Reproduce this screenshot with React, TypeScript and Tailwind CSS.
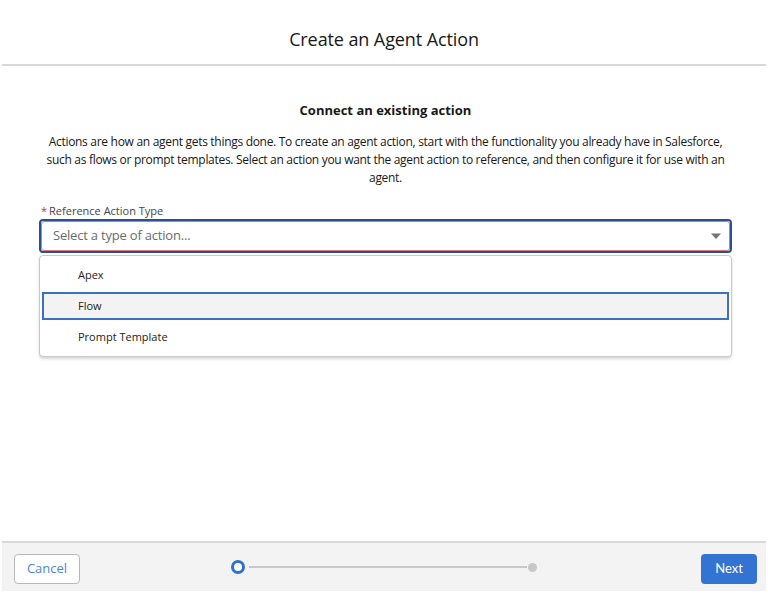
import React from "react";

export default function App() {
  const font = { fontFamily: '"Open Sans", "Noto Sans", sans-serif' };
  return (
    <div className="w-[768px] h-[595px] bg-white flex flex-col text-[#181818]" style={font}>
      <div className="h-[66px] mx-[2px] border-b-2 border-[#d8d8d8] flex items-center justify-center">
        <h1 className="text-[18px] font-normal mt-[14px] tracking-[-0.1px]">Create an Agent Action</h1>
      </div>
      <div className="flex-1 flex flex-col pl-[39px] pr-[36px] pt-[34px]">
        <h2 className="text-center text-[13px] font-bold leading-[20px]">Connect an existing action</h2>
        <p className="text-center text-[12px] leading-[18px] mt-[13px] -mx-[2px] tracking-[-0.3px]">
          Actions are how an agent gets things done. To create an agent action, start with the functionality you already have in Salesforce, such as flows or prompt templates. Select an action you want the agent action to reference, and then configure it for use with an agent.
        </p>
        <div className="mt-[17px] text-[11px] leading-[14px] text-[#444] pl-[2px]">
          <span className="text-[#c23934] mr-[2px]">*</span>Reference Action Type
        </div>
        <div className="relative mt-[1px]">
          <div className="h-[34px] rounded-[4px] border-2 border-[#2a4f94] bg-white">
            <div className="h-full rounded-[3px] border border-[#d9777a] flex items-center justify-between pl-[11px] pr-[7px]">
              <span className="text-[13px] text-[#6b6b6b] tracking-[-0.2px]">Select a type of action...</span>
              <svg width="12" height="8" viewBox="0 0 12 8"><path d="M1 1.5h10L6 7z" fill="#747474" /></svg>
            </div>
          </div>
          <div className="mt-[2px] rounded-[4px] border border-[#c9c9c9] bg-white shadow-[0_2px_3px_rgba(0,0,0,0.16)] pt-[3px] pb-[2px] px-[2px]">
            <div className="h-[33px] flex items-center pl-[36px] text-[11px] text-[#222]">Apex</div>
            <div className="h-[28px] flex items-center pl-[34px] text-[11px] text-[#222] bg-[#f3f3f3] border-2 border-[#3b72c0]">Flow</div>
            <div className="h-[34px] flex items-center pl-[36px] text-[11px] text-[#222]">Prompt Template</div>
          </div>
        </div>
      </div>
      <div className="h-[50px] mx-[2px] mb-[4px] border-t-2 border-[#d8d8d8] bg-[#f3f3f3] flex items-center px-[12px]">
        <button className="w-[66px] h-[30px] mt-[3px] rounded-[4px] border border-[#b8b8b8] bg-white text-[13px] text-[#4a86d6]">Cancel</button>
        <div className="flex items-center ml-[151px]">
          <div className="w-[14px] h-[14px] rounded-full border-[3px] border-[#2c72d0] bg-white" />
          <div className="w-[278px] h-[2px] bg-[#c8c8c8] ml-[4px]" />
          <div className="w-[9px] h-[9px] rounded-full bg-[#c8c8c8] ml-[1px]" />
        </div>
        <div className="flex-1" />
        <button className="w-[56px] h-[30px] mt-[3px] mr-[-3px] rounded-[4px] bg-[#3373d1] text-white text-[13px]" style={{ fontFamily: 'Lato, sans-serif' }}>Next</button>
      </div>
    </div>
  );
}
